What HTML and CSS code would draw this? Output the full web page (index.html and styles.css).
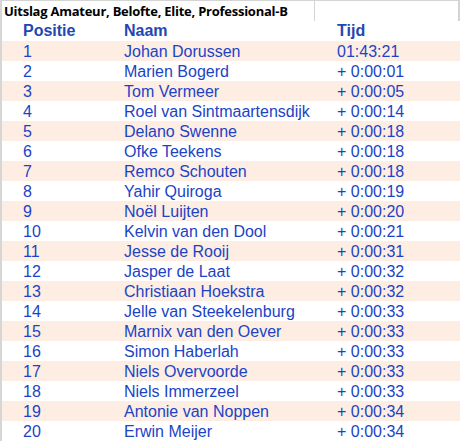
FILE: index.html
```html
<!DOCTYPE html>
<html>
<head>
<meta charset="utf-8">
<link rel="stylesheet" href="styles.css">
</head>
<body>
<div class="sheet">
  <div class="title-row">
    <div class="title">Uitslag Amateur, Belofte, Elite, Professional-B</div>
    <div class="empty-cell"></div>
  </div>
  <div class="row head"><span>Positie</span><span>Naam</span><span>Tijd</span></div>
  <div class="row odd"><span>1</span><span>Johan Dorussen</span><span>01:43:21</span></div>
  <div class="row"><span>2</span><span>Marien Bogerd</span><span>+ 0:00:01</span></div>
  <div class="row odd"><span>3</span><span>Tom Vermeer</span><span>+ 0:00:05</span></div>
  <div class="row"><span>4</span><span>Roel van Sintmaartensdijk</span><span>+ 0:00:14</span></div>
  <div class="row odd"><span>5</span><span>Delano Swenne</span><span>+ 0:00:18</span></div>
  <div class="row"><span>6</span><span>Ofke Teekens</span><span>+ 0:00:18</span></div>
  <div class="row odd"><span>7</span><span>Remco Schouten</span><span>+ 0:00:18</span></div>
  <div class="row"><span>8</span><span>Yahir Quiroga</span><span>+ 0:00:19</span></div>
  <div class="row odd"><span>9</span><span>Noël Luijten</span><span>+ 0:00:20</span></div>
  <div class="row"><span>10</span><span>Kelvin van den Dool</span><span>+ 0:00:21</span></div>
  <div class="row odd"><span>11</span><span>Jesse de Rooij</span><span>+ 0:00:31</span></div>
  <div class="row"><span>12</span><span>Jasper de Laat</span><span>+ 0:00:32</span></div>
  <div class="row odd"><span>13</span><span>Christiaan Hoekstra</span><span>+ 0:00:32</span></div>
  <div class="row"><span>14</span><span>Jelle van Steekelenburg</span><span>+ 0:00:33</span></div>
  <div class="row odd"><span>15</span><span>Marnix van den Oever</span><span>+ 0:00:33</span></div>
  <div class="row"><span>16</span><span>Simon Haberlah</span><span>+ 0:00:33</span></div>
  <div class="row odd"><span>17</span><span>Niels Overvoorde</span><span>+ 0:00:33</span></div>
  <div class="row"><span>18</span><span>Niels Immerzeel</span><span>+ 0:00:33</span></div>
  <div class="row odd"><span>19</span><span>Antonie van Noppen</span><span>+ 0:00:34</span></div>
  <div class="row"><span>20</span><span>Erwin Meijer</span><span>+ 0:00:34</span></div>
</div>
</body>
</html>
```

FILE: styles.css
```css
html, body {
  margin: 0;
  padding: 0;
  background: #ffffff;
}
.sheet {
  width: 458px;
  border-left: 2px solid #d6d6d6;
}
.title-row {
  display: flex;
  height: 20px;
  border-top: 1px solid #d4d4d4;
}
.title {
  width: 310px;
  padding-left: 2px;
  border-right: 1px solid #d4d4d4;
  font-family: "Open Sans", sans-serif;
  font-weight: 700;
  font-size: 13px;
  line-height: 20px;
  color: #000000;
  white-space: nowrap;
  letter-spacing: -0.25px;
}
.empty-cell {
  flex: 1;
  border-right: 2px solid #d4d4d4;
}
.row {
  display: grid;
  grid-template-columns: 101px 213px 1fr;
  box-sizing: border-box;
  height: 20px;
  padding-top: 2px;
  padding-left: 21px;
  font-family: "Liberation Sans", Arial, sans-serif;
  font-size: 16px;
  line-height: 18px;
  color: #1c43c6;
  white-space: nowrap;
}
.row.head {
  padding-top: 1px;
  font-weight: 700;
  color: #1f48b2;
}
.row.odd {
  background: #fdede3;
}
```
